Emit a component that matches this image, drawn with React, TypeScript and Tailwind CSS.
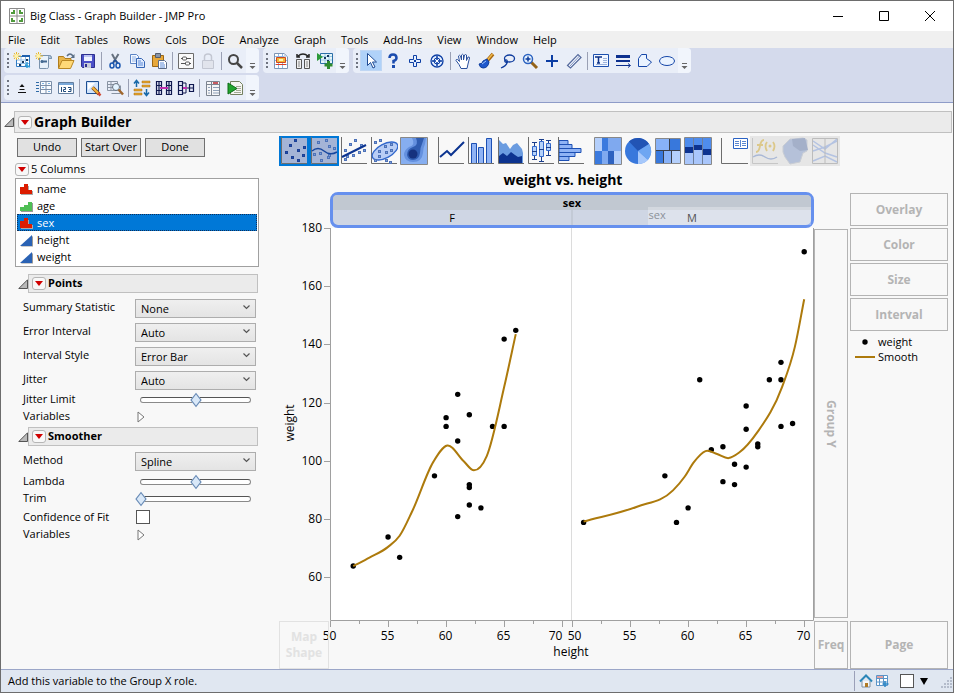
import type { ReactNode } from "react";

const menus = [
  "File",
  "Edit",
  "Tables",
  "Rows",
  "Cols",
  "DOE",
  "Analyze",
  "Graph",
  "Tools",
  "Add-Ins",
  "View",
  "Window",
  "Help",
];

const columns = [
  { name: "name", type: "nominal" },
  { name: "age", type: "ordinal" },
  { name: "sex", type: "nominal" },
  { name: "height", type: "continuous" },
  { name: "weight", type: "continuous" },
];

// [height, weight]
const female = [
  [52, 64], [55, 74], [56, 67], [59, 95], [60, 115], [60, 112],
  [61, 123], [61, 107], [61, 81], [62, 116], [62, 92], [62, 91],
  [62, 85], [63, 84], [64, 112], [65, 142], [65, 112], [66, 145],
];
const male = [
  [51, 79], [58, 95], [59, 79], [60, 84], [61, 128], [62, 104],
  [63, 105], [63, 93], [64, 99], [64, 92], [65, 119], [65, 111],
  [65, 98], [66, 106], [66, 105], [67, 128], [68, 134], [68, 128],
  [68, 112], [69, 113], [70, 172],
];
const femaleFit = [
  [52, 64], [53.4, 66.9], [55, 70.6], [56, 74.4], [57.1, 83],
  [58.9, 99.8], [60.1, 105.4], [61.5, 100.1], [62.4, 96.9],
  [63.5, 101.8], [65, 125.5], [66, 143.7],
];
const maleFit = [
  [51, 79.3], [55.6, 84.4], [58.7, 90], [59.7, 94.7], [60.5, 99.7],
  [61.5, 103.5], [62.5, 102.5], [63.5, 101.1], [64.4, 103], [66, 110.2],
  [68.1, 125.6], [69.2, 139.4], [70, 155.7],
];

const sx = (h: number, left: number) => left + (h - 50) * 11.61;
const sy = (w: number) => (180 - w) * 2.91 + 0.5;

// cubic Hermite through the fitted values
function smoothPath(data: number[][], left: number) {
  const p = data.map(([h, w]) => [sx(h, left), sy(w)]);
  const slope = (i: number) => (p[i + 1][1] - p[i][1]) / (p[i + 1][0] - p[i][0]);
  const m = p.map((_, i) => {
    if (i === 0) return slope(0);
    if (i === p.length - 1) return slope(i - 1);
    const before = p[i][0] - p[i - 1][0];
    const after = p[i + 1][0] - p[i][0];
    return (slope(i - 1) * after + slope(i) * before) / (before + after);
  });
  let d = `M${p[0][0]} ${p[0][1]}`;
  for (let i = 0; i < p.length - 1; i++) {
    const [x0, y0] = p[i];
    const [x1, y1] = p[i + 1];
    const t = (x1 - x0) / 3;
    d += `C${x0 + t} ${y0 + m[i] * t} ${x1 - t} ${y1 - m[i + 1] * t} ${x1} ${y1}`;
  }
  return d;
}

function Svg({ children, size = 18 }: { children: ReactNode; size?: number }) {
  return (
    <svg width={size} height={size} viewBox={`0 0 ${size} ${size}`} fill="none" aria-hidden="true" className="block shrink-0">
      {children}
    </svg>
  );
}

const icons: Record<string, ReactNode> = {
  newTable: (
    <>
      <path d="M3.500 4.500h13v10h-13z" fill="#fff" stroke="#2f7cc4" />
      <path d="M4 8h12M4 11.500h12M8 5v9M12.500 5v9" stroke="#8fbbe4" />
      <path d="M9 3h8v2H9z" fill="#1d5fae" />
      <path d="M3.500 0v8M0 4h8M1 1l5 6M6 1L1 7" stroke="#e8b930" />
      <circle cx="3.500" cy="4" r="2" fill="#fff3a8" />
      <path d="M9 9h2v2H9zM13 7h2v2h-2zM6 12h2v2H6z" fill="#16365f" />
      <path d="M14 10v6M12 13l5 2" stroke="#2b9bd6" strokeWidth="1.500" />
    </>
  ),
  newScript: (
    <>
      <path d="M4.500 3.500h10q2 0 2 3h-3v9q0 1-2 1h-7z" fill="#e9f2fb" stroke="#7a93ad" />
      <path d="M13.500 6.500h3q0-3-2-3-1 0-1 3" fill="#b9cfe4" stroke="#7a93ad" />
      <path d="M6 9.500h6" stroke="#456a92" strokeWidth="2" />
      <circle cx="7" cy="9.500" r="1.500" fill="#456a92" />
      <path d="M3.500 0v8M0 4h8M1 1l5 6M6 1L1 7" stroke="#e8b930" />
      <circle cx="3.500" cy="4" r="2" fill="#fff3a8" />
    </>
  ),
  open: (
    <>
      <path d="M1.500 16V4.500h5l1.500 2h6V9" fill="#e9b64c" stroke="#b07d1d" />
      <path d="M1.500 16.500l3.500-8h12l-3.500 8z" fill="#ffd978" stroke="#b98724" />
      <path d="M10 4q3-4 6 0" stroke="#5a6e86" strokeWidth="1.500" />
      <path d="M17.500 2v4h-4z" fill="#5a6e86" />
    </>
  ),
  save: (
    <>
      <path d="M2.500 2.500h13v13h-12l-1-1z" fill="#4b50c8" stroke="#2d2f8f" />
      <path d="M5 3h8v6H5z" fill="#eef2ff" />
      <path d="M5 3h8v2H5z" fill="#bcc4f0" />
      <path d="M5 11h7v5H5z" fill="#c9cdd8" />
      <path d="M6 12h2v3H6z" fill="#2d2f8f" />
    </>
  ),
  cut: (
    <>
      <path d="M6 2l5 9M12.500 2L7 11" stroke="#66717f" strokeWidth="2" />
      <path d="M9 8l-2 3M9 8l3 3" stroke="#1c4f9c" strokeWidth="1.500" />
      <ellipse cx="6" cy="13.500" rx="2" ry="2.500" stroke="#1c58b0" strokeWidth="1.500" />
      <ellipse cx="12" cy="13.500" rx="2" ry="2.500" stroke="#1c58b0" strokeWidth="1.500" />
    </>
  ),
  copy: (
    <>
      <path d="M2.500 2.500h6l2 2v7h-8z" fill="#f4f8ff" stroke="#5b83c4" />
      <path d="M4 5h4M4 7h5M4 9h5" stroke="#8fb0e4" />
      <path d="M8.500 6.500h5l3 3v6h-8z" fill="#dfeafd" stroke="#3464b4" />
      <path d="M10 9h3M10 11h5M10 13h5" stroke="#5a8ad8" />
    </>
  ),
  paste: (
    <>
      <path d="M2.500 3.500h11v11h-11z" fill="#e8a83a" stroke="#9c6713" />
      <path d="M5.500 1.500h5v4h-5z" fill="#8b95a5" stroke="#545e6e" />
      <path d="M8.500 8.500h6l2 2v6h-8z" fill="#fff" stroke="#5a6b88" />
      <path d="M10 11h4M10 13h5M10 15h5" stroke="#5a8ad8" />
    </>
  ),
  prefs: (
    <>
      <path d="M1.500 1.500h15v15h-15z" fill="#fafafa" stroke="#6c6c6c" />
      <path d="M4 6.500h10M4 11.500h10" stroke="#555" />
      <rect x="5.500" y="5" width="4" height="3" rx="1" fill="#fff" stroke="#555" />
      <rect x="8.500" y="10" width="4" height="3" rx="1" fill="#fff" stroke="#555" />
    </>
  ),
  lock: (
    <>
      <path d="M5.500 8V5q0-3 3.500-3t3.500 3v3" stroke="#c3c7d2" strokeWidth="1.500" />
      <path d="M3.500 8.500h11v8h-11z" fill="#e1e4ec" stroke="#c3c7d2" />
    </>
  ),
  search: (
    <>
      <circle cx="7.500" cy="7.500" r="4.500" stroke="#454545" strokeWidth="2" />
      <path d="M11 11l5 5" stroke="#454545" strokeWidth="2.500" />
    </>
  ),
  chartSheet: (
    <>
      <path d="M2.500 1.500h10l3 3v12h-13z" fill="#fff" stroke="#7d95b5" />
      <path d="M3 4.500h12M3 8.500h12M3 12.500h12M6.500 2v14M10.500 2v14" stroke="#8fb8e4" />
      <path d="M4.500 5.500h9v5h-9z" fill="#f1b73a" stroke="#d0461f" />
      <path d="M7 7h4v2H7z" fill="#fff2b0" />
      <path d="M4 12.500h10" stroke="#dd3a22" />
      <path d="M12 1l4 4h-4z" fill="#c8d4e6" />
    </>
  ),
  compare: (
    <>
      <path d="M2.500 7.500h5v9h-5zM10.500 7.500h5v9h-5z" fill="#eee" stroke="#555" />
      <path d="M4 10h2M4 12h2M4 14h2M12 10h2M12 12h2M12 14h2" stroke="#888" />
      <path d="M4 4q5-4 10 0M3 2v3h3M15 2v3h-3" stroke="#222" strokeWidth="1.500" />
    </>
  ),
  addTable: (
    <>
      <path d="M4.500 1.500h12v10h-12z" fill="#e6f5fb" stroke="#2b6fa8" />
      <path d="M5 4.500h11M5 8h11M9 2v9M13 2v9" stroke="#9ccbe2" />
      <path d="M1 1l6 4-6 4z" fill="#2c9a3a" />
      <path d="M8 5h2v2H8zM11 3h2v2h-2zM11 8h2v2h-2z" fill="#16365f" />
      <path d="M12.500 9v8M8.500 13h8" stroke="#2e8b2e" strokeWidth="3" />
    </>
  ),
  arrow: <path d="M5.500 1.500v12l3-3 2.500 5.500 2-1-2.500-5h4z" fill="#fff" stroke="#1f4b94" />,
  help: (
    <>
      <path d="M5.500 6q0-3.500 3.500-3.500T12.500 6Q12.500 8 9.500 9v2.500" stroke="#1c4cae" strokeWidth="2.500" />
      <path d="M8 13h3v3H8z" fill="#1c4cae" />
    </>
  ),
  crosshair: (
    <>
      <path d="M7.500 3.500h3v4h4v3h-4v4h-3v-4h-4v-3h4z" fill="#e6f0ff" stroke="#0d3fa5" />
      <path d="M8 8h2v2H8z" fill="#0d3fa5" />
    </>
  ),
  target: (
    <>
      <circle cx="9" cy="9" r="6" fill="#e6f0ff" stroke="#0d3fa5" strokeWidth="1.300" />
      <path d="M9 4v10M4 9h10" stroke="#0d3fa5" strokeWidth="1.500" />
      <circle cx="9" cy="9" r="3" stroke="#0d3fa5" />
      <path d="M8 8h2v2H8z" fill="#fff" />
    </>
  ),
  hand: (
    <path
      d="M6 16.500l-2-4-3-4q0-1.500 1.500-1l2 2-1-5.500q1-1.500 2 0l1 4V3q1-1.500 2 0v5l1-5q1-1 2 0v5.500l1.500-3.500q1.500-.5 1.500 1l-1.500 6-1 4.500z"
      fill="#fff"
      stroke="#2a4f9c"
    />
  ),
  brush: (
    <>
      <path d="M10 9l6-7" stroke="#a8670f" strokeWidth="3.500" />
      <path d="M10 8.500l5.500-6.500" stroke="#f0b94c" strokeWidth="1.500" />
      <path d="M2 12q4 0 4-3l4-2 2 3q-1 6-6 6-3 0-4-4z" fill="#1f58cc" stroke="#0d3c9d" />
      <path d="M5 12l4-3" stroke="#9cc4ff" />
    </>
  ),
  lasso: (
    <>
      <ellipse cx="10.500" cy="6.500" rx="5" ry="3.500" stroke="#0e3b9d" strokeWidth="1.300" />
      <path d="M9 10q-4 1-3-2 3-1 2 3-1 3-6 5" stroke="#0e3b9d" strokeWidth="1.300" />
    </>
  ),
  zoomIn: (
    <>
      <path d="M10 10l6 6" stroke="#94631a" strokeWidth="3" />
      <circle cx="7" cy="7" r="4.500" fill="#e6f2ff" stroke="#2b62c0" strokeWidth="1.500" />
      <path d="M7 4.500v5M4.500 7h5" stroke="#0b3a9a" strokeWidth="1.500" />
    </>
  ),
  plus: <path d="M9 3v12M3 9h12" stroke="#0c3da3" strokeWidth="2" />,
  ruler: (
    <>
      <path d="M2.500 13.500L13 2.500l3 3L5.500 16z" fill="#f6f9ff" stroke="#54699c" strokeWidth="1.200" />
      <path d="M4 15L14.500 4" stroke="#7b8fc0" />
    </>
  ),
  textTool: (
    <>
      <path d="M1.500 2.500h15v12h-15z" fill="#f1f6ff" stroke="#1b4fae" />
      <path d="M3 5h7M6.500 5v6M5 11h3" stroke="#0a2f86" strokeWidth="1.500" />
      <path d="M11 6.500h4M11 8.500h4M11 10.500h4M4 12.500h11" stroke="#9bb2dc" />
    </>
  ),
  lines: (
    <>
      <path d="M2 4.500h14" stroke="#0c2f8e" strokeWidth="3" />
      <path d="M2 9h14" stroke="#0c2f8e" strokeWidth="2" />
      <path d="M2 13.500h14M14 11.500l2.500 2-2.500 2" stroke="#0c2f8e" />
    </>
  ),
  polygon: <path d="M2.500 14.500v-8l3-4h5v4l5 3.500-4.500 4.500z" fill="#eaf3ff" stroke="#1546a8" />,
  oval: <ellipse cx="9" cy="9" rx="7.500" ry="4.500" fill="#eaf3ff" stroke="#1546a8" />,
  sortUp: (
    <>
      <path d="M9 5l2.500 3h-5z" fill="#111" />
      <path d="M6.500 10.500h5M5 13.500h8" stroke="#111" />
    </>
  ),
  gridList: (
    <>
      <path d="M5.500 2.500h11v12h-11zM5.500 6.500h11M5.500 10.500h11M11 2.500v12" fill="#f8fbff" stroke="#7c8fa8" />
      <path d="M1 3.500h3M1 6.500h3M1 9.500h3M1 12.500h3" stroke="#2e6aa6" />
      <path d="M7 4.500h2M13 4.500h2M7 8.500h2M13 12.500h2" stroke="#7fb2e0" />
    </>
  ),
  grid123: (
    <>
      <path d="M1.500 3.500h15v11h-15z" fill="#fff" stroke="#637e9f" />
      <path d="M2 4h14v2H2z" fill="#7aa8d8" />
      <path d="M4.500 8v5M6.500 8.500h2v2h-2v2h2.500M11 8.500h3v4h-3M12 10.500h2" stroke="#234d7d" />
    </>
  ),
  editCell: (
    <>
      <path d="M2.500 2.500h12v12h-12z" fill="#cfe3fb" stroke="#1d4f93" />
      <path d="M4 4h7L4 11z" fill="#fff" />
      <path d="M8.500 8.500l6.500 6.500" stroke="#8a4a16" strokeWidth="3.500" />
      <path d="M8.500 8.500l6 6" stroke="#f4b73b" strokeWidth="2" />
      <path d="M14 14l2.500 2.500" stroke="#d04a35" strokeWidth="2.500" />
    </>
  ),
  searchGrid: (
    <>
      <path d="M1.500 2.500h10v9h-10zM1.500 5.500h10M1.500 8.500h10M5 2.500v9M5.500 14.500h9v-8" stroke="#8994a3" />
      <circle cx="10" cy="8" r="3.500" fill="#e4f4ff" stroke="#66717f" />
      <path d="M12.500 10.500l4.500 5" stroke="#a0672c" strokeWidth="2.500" />
    </>
  ),
  swap: (
    <>
      <path d="M9 2h8v2H9zM9 6h8v2H9zM1 10h8v2H1zM1 14h8v2H1z" fill="#e7a52d" stroke="#a56f10" strokeWidth=".5" />
      <path d="M3.500 8V3M1 4.500l2.500-3 2.500 3M13.500 10v5M11 13.500l2.500 3 2.500-3" stroke="#1768a8" strokeWidth="1.500" />
    </>
  ),
  join: (
    <>
      <path d="M1.500 2.500h5v13h-5zM1.500 6.500h5M1.500 11.500h5M4 2.500v13M11.500 2.500h5v13h-5zM11.500 6.500h5M11.500 11.500h5M14 2.500v13" fill="#dfe3f4" stroke="#10194f" strokeWidth="1.200" />
      <path d="M5 9h8" stroke="#c02fb0" strokeWidth="2" />
    </>
  ),
  split: (
    <>
      <path d="M1.500 2.500h4v13h-4zM1.500 6.500h4M1.500 11.500h4M12.500 5.500h4v7h-4zM12.500 9h4" fill="#dfe3f4" stroke="#10194f" strokeWidth="1.200" />
      <path d="M6 4h3v5h3M6 14h3V9" stroke="#10194f" />
      <path d="M6 9h4" stroke="#c02fb0" strokeWidth="2" />
    </>
  ),
  report: (
    <>
      <path d="M2.500 2.500h13v14h-13z" fill="#f5f6f8" stroke="#7d8591" />
      <path d="M2.500 5.500h13M7.500 3v13" stroke="#7d8591" />
      <path d="M9 8.500h6M9 11.500h6M9 14h6M4 8.500h2M4 11.500h2M4 14h2" stroke="#8fa0b8" />
      <path d="M9 3h5v2H9z" fill="#c75b62" />
    </>
  ),
  runScript: (
    <>
      <path d="M4.500 2.500h9l3 3v10h-12z" fill="#f6f6f2" stroke="#74805f" />
      <path d="M10 7.500h5M11 9.500h4M10 11.500h5M8 13.500h7" stroke="#a4a995" />
      <path d="M2 4l9 5.500L2 15z" fill="#23a52e" stroke="#0c6d17" />
    </>
  ),
};

type Item = string | null;

const toolRows: { label: string; items: Item[] }[][] = [
  [
    {
      label: "File",
      items: ["newTable", "newScript", "open", "save", null, "cut", "copy", "paste", null, "prefs", "lock", null, "search"],
    },
    { label: "Analysis", items: ["chartSheet", "compare", "addTable"] },
    {
      label: "Tools",
      items: [
        "arrow", "help", "crosshair", "target", null,
        "hand", "brush", "lasso", "zoomIn", "plus", "ruler", null,
        "textTool", "lines", "polygon", "oval",
      ],
    },
  ],
  [
    {
      label: "Tables",
      items: ["sortUp", "gridList", "grid123", null, "editCell", "searchGrid", null, "swap", "join", "split", null, "report", "runScript"],
    },
  ],
];

function ToolGroup({ label, items }: { label: string; items: Item[] }) {
  return (
    <div role="toolbar" aria-label={label} className="flex h-[25px] items-center rounded bg-[#e9eef8]">
      <div className="ml-[3px] mr-px h-[15px] w-[3px] border-l-2 border-dotted border-[#6f7480]" />
      {items.map((item, i) =>
        item ? (
          <button
            key={i}
            aria-label={item}
            className={`flex h-[21px] w-[22px] items-center justify-center ${item === "arrow" ? "border border-[#bfd6f3] bg-[#b0d2f9]" : ""}`}
          >
            <Svg>{icons[item]}</Svg>
          </button>
        ) : (
          <div key={i} className="mx-[2px] h-[18px] w-px bg-[#9aa0b4]" />
        )
      )}
      <button aria-label="More" className="flex h-full w-[13px] items-end justify-center rounded-r bg-[#f1f5fc] pb-[3px]">
        <svg width="7" height="7" viewBox="0 0 7 7" aria-hidden="true">
          <path d="M1 0h5v1H1zM.5 3h6L3.500 6z" fill="#666" />
        </svg>
      </button>
    </div>
  );
}

function Disclosure() {
  return (
    <svg width="10" height="10" viewBox="0 0 10 10" className="shrink-0" aria-hidden="true">
      <path d="M9.500 .8v8.700H.8z" fill="#b9b9b9" stroke="#555" />
    </svg>
  );
}

function RedTriangle() {
  return (
    <button aria-label="Options" className="flex h-[13px] w-[14px] shrink-0 items-center justify-center rounded-[3px] border border-[#b5b5b5] bg-[#f8f8f8]">
      <svg width="8" height="5" viewBox="0 0 8 5" aria-hidden="true">
        <path d="M0 0h8L4 5z" fill="#d00000" />
      </svg>
    </button>
  );
}

function ColumnIcon({ type }: { type: string }) {
  return (
    <svg width="13" height="13" viewBox="0 0 13 13" className="shrink-0" shapeRendering={type === "continuous" ? "auto" : "crispEdges"} aria-hidden="true">
      {type === "nominal" && (
        <>
          <path d="M1 11h12v1H1zM8 3h1v4H8zM12 8h1v4h-1z" fill="#a9a9a9" />
          <path d="M0 4h4V1h4v10H0zM8 7h4v4H8z" fill="#dc1c00" />
        </>
      )}
      {type === "ordinal" && (
        <>
          <path d="M1 11h12v1H1zM12 3h1v9h-1z" fill="#999" />
          <path d="M0 7h4V5h4V2h4v9H0z" fill="#4fbf55" />
        </>
      )}
      {type === "continuous" && (
        <>
          <path d="M1 12.500h12V2z" fill="#999" />
          <path d="M0 12L12 1v11z" fill="#2a62b4" />
        </>
      )}
    </svg>
  );
}

function SectionHeader({ title }: { title: string }) {
  return (
    <div className="flex items-center pl-[17px]">
      <Disclosure />
      <h2 className="flex h-[19px] flex-1 items-center gap-[2px] border border-[#c0c0c0] bg-[#ebebeb] pl-[3px] text-[11px] font-bold">
        <RedTriangle />
        {title}
      </h2>
    </div>
  );
}

const labelStyle = "w-[112px] shrink-0 text-[11px] leading-4";

function SelectRow({ label, value }: { label: string; value: string }) {
  const id = label.toLowerCase().replace(/ /g, "-");
  return (
    <div className="flex h-5">
      <label htmlFor={id} className={labelStyle}>
        {label}
      </label>
      <div className="relative flex-1">
        <select id={id} defaultValue={value} className="h-[19px] w-full appearance-none border border-[#adadad] bg-linear-to-b from-[#efefef] to-[#e4e4e4] pl-[5px] text-[11px] leading-4">
          <option>{value}</option>
        </select>
        <svg width="7" height="5" viewBox="0 0 7 5" className="pointer-events-none absolute right-1.5 top-1.5" aria-hidden="true">
          <path d="M.5 .5l3 3 3-3" fill="none" stroke="#555" strokeWidth="1.200" />
        </svg>
      </div>
    </div>
  );
}

function SliderRow({ label, value }: { label: string; value: number }) {
  const id = label.toLowerCase().replace(/ /g, "-");
  return (
    <div className="flex h-[17px] items-center">
      <label htmlFor={id} className={`${labelStyle} pb-0.5`}>
        {label}
      </label>
      <div className="ml-[5px] mr-[5px] flex h-1.5 flex-1 items-center rounded-full border border-[#8a8a8a] border-t-[#555] bg-white">
        <input
          id={id}
          type="range"
          defaultValue={value}
          className="-mx-1 h-4 w-[117px] shrink-0 appearance-none bg-transparent [&::-webkit-slider-thumb]:size-2 [&::-webkit-slider-thumb]:appearance-none [&::-webkit-slider-thumb]:border [&::-webkit-slider-thumb]:border-[#6b8cb5] [&::-webkit-slider-thumb]:bg-[#d9e8f8] [&::-webkit-slider-thumb]:[transform:scaleY(1.3)_rotate(45deg)]"
        />
      </div>
    </div>
  );
}

function VariablesRow() {
  return (
    <div className="flex h-[17px] items-center">
      <span className={`${labelStyle} pb-0.5`}>Variables</span>
      <button aria-label="Show variables" className="ml-0.5">
        <svg width="8" height="12" viewBox="0 0 8 12" aria-hidden="true">
          <path d="M1 1v10l6-5z" fill="#fff" stroke="#777" />
        </svg>
      </button>
    </div>
  );
}

const axes = <path d="M1.500 0v26.500H27" stroke="#6d6d6d" />;

function Dots({ at, fill = "#7f9fd8", stroke = "#4d72b8" }: { at: number[][]; fill?: string; stroke?: string }) {
  return (
    <>
      {at.map(([x, y], i) => (
        <rect key={i} x={x + 0.5} y={y + 0.5} width="2" height="2" fill={fill} stroke={stroke} />
      ))}
    </>
  );
}

const gallery: { label: string; art: ReactNode }[][] = [
  [
    {
      label: "Points",
      art: (
        <>
          {axes}
          <Dots fill="#1f4fb0" stroke="#1c3f94" at={[[14, 2], [9, 7], [23, 9], [5, 14], [17, 12], [11, 19], [22, 17], [17, 22]]} />
        </>
      ),
    },
    {
      label: "Smoother",
      art: (
        <>
          {axes}
          <Dots at={[[7, 4], [15, 2], [23, 10], [18, 8], [9, 15], [3, 16], [18, 17], [10, 22], [17, 19]]} />
          <path d="M2 14q6-5 12 0t13 1" stroke="#17469e" strokeWidth="1.500" />
        </>
      ),
    },
    {
      label: "Line of Fit",
      art: (
        <>
          {axes}
          <Dots at={[[9, 6], [14, 2], [4, 12], [20, 7], [6, 18], [12, 17], [18, 14], [23, 12], [4, 21]]} />
          <path d="M2 20L26 8" stroke="#0b3390" strokeWidth="2" />
        </>
      ),
    },
    {
      label: "Ellipse",
      art: (
        <>
          {axes}
          <ellipse cx="15" cy="14" rx="14" ry="7" transform="rotate(-28 15 14)" fill="#b8cdf5" stroke="#3268cc" strokeWidth="1.300" />
          <Dots at={[[4, 4], [9, 2], [14, 8], [20, 6], [8, 13], [15, 14], [20, 12], [8, 18], [15, 22], [4, 22], [19, 24]]} />
        </>
      ),
    },
    {
      label: "Contour",
      art: (
        <>
          <path d="M.5 .5h27v27H.5z" fill="#86aef0" stroke="#888" />
          <path d="M12 1q4 7-3 9-5 3-5 8 1 7 9 7 9 0 10-9 0-5 2-9l1-6z" fill="#6490de" />
          <path d="M16 1q3 7-3 9-6 2-6 8 1 5 6 5 6 0 7-7 0-5 2-9l2-6z" fill="#2f5cb0" />
          <circle cx="13" cy="17" r="4.500" fill="#16327e" />
        </>
      ),
    },
  ],
  [
    { label: "Line", art: <>{axes}<path d="M3 20l7-6 4 4L27 5" stroke="#0b3390" strokeWidth="2" /></> },
    {
      label: "Bar",
      art: (
        <>
          {axes}
          <path d="M4.500 26V6.500h5V26M11.500 26V10.500h5V26M19.500 26V1.500h5V26" fill="#8fb3f5" stroke="#1d50b4" />
        </>
      ),
    },
    {
      label: "Area",
      art: (
        <>
          <path d="M2 26V3l4 4 3-1 4 6 3-4 4-2 5 6 1 4v10z" fill="#6b9ce0" />
          <path d="M2 26v-7l4-3 4 3 4-4 4 3 3 2 4-1v7z" fill="#0d338f" />
          {axes}
        </>
      ),
    },
    {
      label: "Box Plot",
      art: (
        <>
          {axes}
          <path d="M7.500 5v18M14.500 2v22M21.500 3v16M5 5.500h5M5 22.500h5M12 2.500h5M12 24.500h5M19 3.500h5M19 18.500h5" stroke="#1b3f8c" />
          <path d="M5.500 9.500h4v9h-4zM12.500 4.500h4v15h-4zM19.500 6.500h4v7h-4z" fill="#b5d2fa" stroke="#3268cc" />
          <path d="M5 14.500h5M12 12.500h5M19 10.500h5" stroke="#1b3f8c" />
        </>
      ),
    },
    {
      label: "Histogram",
      art: (
        <>
          <path d="M2 3.500h9v4H2zM2 7.500h13v4H2zM2 11.500h22v4H2zM2 15.500h16v4H2zM2 19.500h10v4H2z" fill="#8fb3f5" stroke="#1d50b4" />
          {axes}
        </>
      ),
    },
  ],
  [
    {
      label: "Heatmap",
      art: (
        <>
          <path d="M1 1h26v26H1z" fill="#7fa9ef" />
          <path d="M1 1h7v13H1zM20 14h7v13h-7z" fill="#b4cffb" />
          <path d="M8 1h6v13H8zM1 14h7v13H1z" fill="#3b7ade" />
          <path d="M14 14h6v13h-6z" fill="#2d62c0" />
          <path d="M.5 .5h27v27H.5z" stroke="#888" />
        </>
      ),
    },
    {
      label: "Pie",
      art: (
        <>
          <circle cx="14" cy="14" r="13" fill="#3878dc" />
          <path d="M14 14L5 4.500A13 13 0 0 1 25 7z" fill="#2254b4" />
          <path d="M14 14l11-7a13 13 0 0 1-1 16z" fill="#6ea6f2" />
          <path d="M14 14l10 9a13 13 0 0 1-10 4z" fill="#a6c8fb" />
        </>
      ),
    },
    {
      label: "Treemap",
      art: (
        <>
          <path d="M2 2h24v24H2z" fill="#3878dc" />
          <path d="M2 2h13v12H2zM9 14h9v12H9z" fill="#88b2f8" />
          <path d="M18 14h8v12h-8z" fill="#b4cffb" />
          <path d="M15.500 2v12M2 13.500h24M9.500 14v12M17.500 14v12" stroke="#3a3f4a" />
          <path d="M1.500 1.500h25v25h-25z" stroke="#888" />
        </>
      ),
    },
    {
      label: "Mosaic",
      art: (
        <>
          <path d="M1 1h26v26H1z" fill="#4f8cec" />
          <path d="M1 15h8v12H1zM10 12h8v15h-8zM19 17h8v10h-8z" fill="#a9c6fb" />
          <path d="M1 10h8v6H1zM10 8h8v5h-8zM19 12h8v6h-8z" fill="#0d3390" />
          <path d="M9.500 1v26M18.500 1v26" stroke="#6f7f9c" />
          <path d="M.5 .5h27v27H.5z" stroke="#888" />
        </>
      ),
    },
  ],
  [
    {
      label: "Caption Box",
      art: (
        <>
          <path d="M.5 1v25.500H27" stroke="#6d6d6d" />
          <path d="M12.500 1.500h14v10h-14z" fill="#fff" stroke="#2a62c4" />
          <path d="M19.500 3v7M14 4.500h4M14 6.500h4M14 8.500h4M21 4.500h4M21 6.500h4M21 8.500h4" stroke="#5a86d0" />
        </>
      ),
    },
    {
      label: "Formula",
      art: (
        <>
          <path d="M1.500 1v25.500H27" stroke="#c6c6c6" />
          <path d="M5 15q3 0 4-6t4-6M6 8h6M16 5q-3 4 0 9M22 5q3 4 0 9" stroke="#dcc88a" strokeWidth="1.800" />
          <circle cx="19" cy="9" r="1.500" fill="#dcc88a" />
          <path d="M2 20q6-4 12 0t12 0" stroke="#a9b8d6" strokeWidth="1.500" />
        </>
      ),
    },
    {
      label: "Map Shapes",
      art: (
        <>
          <path d="M2 9l7-7h4l9-1 4 2v11l-4 2-3 9-10 2-5-7-2-5z" fill="#b5c1d9" stroke="#c9cdd4" />
          <path d="M11 2l13-1 3 12-8 1-7-5z" fill="#a4b0c9" />
        </>
      ),
    },
    {
      label: "Parallel",
      art: (
        <>
          <path d="M2 4l12 8L26 2M2 14l12-4 12-6M2 24l12-5 12 6M2 8l12 8 12 4" stroke="#b4c3e2" strokeWidth="1.500" />
          <path d="M1.500 1.500h25v25h-25zM14 1v26" stroke="#bcbcbc" />
        </>
      ),
    },
  ],
];

function Gallery() {
  return (
    <div className="flex h-[30px] items-center">
      {gallery.map((group, g) => (
        <div key={g} className={`flex ${g ? "ml-[7px]" : ""}`}>
          {group.map(({ label, art }, i) => (
            <button
              key={label}
              aria-label={label}
              className={`flex size-[30px] items-center justify-center ${
                g === 0 && i < 2 ? "border-2 border-[#0078d7] bg-[#a5b4d6]" : g === 3 && i > 0 ? "bg-[#e6e6e6]" : ""
              }`}
            >
              <Svg size={28}>{art}</Svg>
            </button>
          ))}
        </div>
      ))}
    </div>
  );
}

function Panel({ left, points, fit }: { left: number; points: number[][]; fit: number[][] }) {
  return (
    <>
      {points.map(([h, w], i) => (
        <circle key={i} cx={sx(h, left)} cy={sy(w)} r="2.700" fill="#000" />
      ))}
      <path d={smoothPath(fit, left)} fill="none" stroke="#ad7a0c" strokeWidth="2" />
    </>
  );
}

function Chart() {
  return (
    <svg viewBox="0 0 535 441" className="w-full overflow-visible font-[Open_Sans] text-[12px]" role="img" aria-label="weight vs. height">
      <rect x="51" y="0" width="483" height="392" fill="#fff" />
      <path d="M292.500 0v392" stroke="#dcdcdc" />
      <path d="M51.500 0v392.500H534.500V0" fill="none" stroke="#a0a0a0" />
      {[60, 80, 100, 120, 140, 160, 180].map((w) => (
        <g key={w}>
          <path d={`M45 ${Math.floor(sy(w)) + 0.5}h6`} stroke="#a0a0a0" />
          <text x="43" y={Math.floor(sy(w)) + 4} textAnchor="end">
            {w}
          </text>
        </g>
      ))}
      {[51, 293].map((left) =>
        [50, 52.5, 55, 57.5, 60, 62.5, 65, 67.5, 70].map((h) => {
          const x = Math.floor(sx(h, left)) + 0.5;
          return (
            <g key={`${left}-${h}`}>
              <path d={`M${x} 393v${h % 5 ? 3 : 6}`} stroke="#a0a0a0" />
              {h % 5 === 0 && (
                <text x={h === 50 && left > 51 ? x + 2 : h === 70 && left === 51 ? x - 7 : x - 1} y="412" textAnchor="middle">
                  {h}
                </text>
              )}
            </g>
          );
        })
      )}
      <text x="292" y="428" textAnchor="middle">
        height
      </text>
      <text transform="translate(15 195) rotate(-90)" textAnchor="middle">
        weight
      </text>
      <Panel left={51} points={female} fit={femaleFit} />
      <Panel left={293} points={male} fit={maleFit} />
    </svg>
  );
}

function DropZone({ children, className = "" }: { children: ReactNode; className?: string }) {
  return (
    <div className={`flex items-center justify-center border border-[#b4b4b4] text-center text-xs font-bold text-[#b4b4b4] ${className}`}>
      {children}
    </div>
  );
}

export default function App() {
  return (
    <div className="flex h-screen flex-col border border-[#6d6d6d] bg-[#f8f8f8] font-[Open_Sans,sans-serif] text-xs text-black">
      <header className="flex h-[30px] shrink-0 items-center bg-white pl-2">
        <Svg size={16}>
          <path d="M.5 .5h15v15H.5zM8 0v16M0 8h16" fill="#fff" stroke="#8a8a8a" />
          <path d="M2 6V4h2V2h2v4zM10 6V2h2v2h2v2zM2 14v-4h2v2h2v2zM10 14v-2h2v-2h2v4z" fill="#4f9a3c" />
        </Svg>
        <h1 className="ml-[5px] flex-1 text-[11px]">Big Class - Graph Builder - JMP Pro</h1>
        <button aria-label="Minimize" className="flex w-[46px] justify-center">
          <Svg size={12}><path d="M1 6.500h10" stroke="#000" /></Svg>
        </button>
        <button aria-label="Maximize" className="flex w-[46px] justify-center">
          <Svg size={12}><path d="M1.500 1.500h9v9h-9z" stroke="#000" /></Svg>
        </button>
        <button aria-label="Close" className="flex w-[46px] justify-center">
          <Svg size={12}><path d="M1 1l10 10M11 1L1 11" stroke="#000" /></Svg>
        </button>
      </header>

      <nav className="flex h-[17px] shrink-0 items-center gap-[15px] bg-[#f0f0f0] pl-[7px] pt-0.5 text-[11px]">
        {menus.map((menu) => (
          <button key={menu}>{menu}</button>
        ))}
      </nav>

      <div className="flex shrink-0 flex-col gap-[2px] border-b border-[#8f9cc8] bg-[#d4daec] pb-[2px] pl-[3px]">
        {toolRows.map((row, i) => (
          <div key={i} className="flex gap-1">
            {row.map((group) => (
              <ToolGroup key={group.label} {...group} />
            ))}
          </div>
        ))}
      </div>

      <div className="mt-2 flex shrink-0 items-center pl-[3px] pr-px">
        <Disclosure />
        <h2 className="flex h-[22px] flex-1 items-center gap-[2px] border border-[#c0c0c0] bg-[#ebebeb] pl-[3px] text-sm font-bold">
          <RedTriangle />
          Graph Builder
        </h2>
      </div>

      <main className="flex min-h-0 flex-1">
        <aside className="w-[257px] shrink-0 pt-[5px]">
          <div className="flex gap-1 pl-4 text-[11px]">
            {["Undo", "Start Over", "Done"].map((label) => (
              <button key={label} className="flex h-[19px] w-[60px] items-center justify-center whitespace-nowrap border border-[#707070] bg-[#e1e1e1]">
                {label}
              </button>
            ))}
          </div>
          <div className="flex h-[21px] items-center gap-[2px] pl-[14px] pt-1 text-[11px]">
            <RedTriangle />5 Columns
          </div>
          <ul className="ml-[14px] -mr-px border border-[#a0a0a0] bg-white p-px text-[11px]">
            {columns.map(({ name, type }) => (
              <li
                key={name}
                className={`flex h-[17px] items-center gap-1 border pl-0.5 pt-0.5 ${
                  name === "sex" ? "border-dotted border-[#10305a] bg-[#0078d7] text-white" : "border-transparent"
                }`}
              >
                <ColumnIcon type={type} />
                {name}
              </li>
            ))}
          </ul>

          <div className="mt-[7px]">
            <SectionHeader title="Points" />
            <div className="mb-[2px] pl-[22px] pr-0.5 pt-1.5">
              <div className="flex flex-col gap-1">
                <SelectRow label="Summary Statistic" value="None" />
                <SelectRow label="Error Interval" value="Auto" />
                <SelectRow label="Interval Style" value="Error Bar" />
                <SelectRow label="Jitter" value="Auto" />
              </div>
              <SliderRow label="Jitter Limit" value={50} />
              <VariablesRow />
            </div>
            <SectionHeader title="Smoother" />
            <div className="pl-[22px] pr-0.5 pt-1.5">
              <div className="mb-px">
                <SelectRow label="Method" value="Spline" />
              </div>
              <SliderRow label="Lambda" value={50} />
              <SliderRow label="Trim" value={0} />
              <div className="flex h-[19px] items-center">
                <label htmlFor="fit" className={labelStyle}>
                  Confidence of Fit
                </label>
                <input id="fit" type="checkbox" className="ml-px size-[14px] appearance-none border border-[#555] bg-white" />
              </div>
              <VariablesRow />
            </div>
          </div>
        </aside>

        <section className="ml-[21px] flex min-w-0 flex-1 flex-col pr-[5px] pt-[3px]">
          <Gallery />
          <div className="flex min-h-0 flex-1">
            <div className="relative flex min-w-0 flex-1 flex-col">
              <h3 className="mb-[2px] ml-[33px] mt-1 text-center text-sm font-bold">weight vs. height</h3>
              <div className="relative ml-[51px] grid h-9 grid-cols-2 grid-rows-2 rounded-lg border-3 border-[#6690ee] bg-[#cfd6e4] text-center text-[11px] leading-[15px]">
                <div className="col-span-2 rounded-t bg-[#c1c8d1] font-bold">sex</div>
                <div className="border-r border-[#c3cad6]">F</div>
                <div className="border-l border-[#c3cad6]">M</div>
                <div className="absolute bottom-0 left-[66%] right-0 top-3 bg-white/30 text-left text-[11px] leading-[15px] text-[#8b9199]">sex</div>
              </div>
              <Chart />
              <DropZone className="absolute bottom-0 left-0 h-12 w-[50px] border-[#e2e2e2] leading-4 text-[#e2e2e2]">
                Map
                <br />
                Shape
              </DropZone>
            </div>
            <div className="flex w-[34px] shrink-0 flex-col gap-[3px] pt-[63px]">
              <DropZone className="flex-1 [writing-mode:vertical-rl]">Group Y</DropZone>
              <DropZone className="h-12">Freq</DropZone>
            </div>
            <div className="ml-0.5 flex w-[98px] shrink-0 flex-col gap-[2px] pt-[27px]">
              {["Overlay", "Color", "Size", "Interval"].map((zone) => (
                <DropZone key={zone} className="h-[33px]">
                  {zone}
                </DropZone>
              ))}
              <div className="flex-1 pl-[5px] pt-px text-[11px] leading-[15px]">
                <div className="flex items-center gap-[3px]">
                  <svg width="20" height="6" aria-hidden="true"><circle cx="10" cy="3" r="2.700" /></svg>
                  weight
                </div>
                <div className="flex items-center gap-[3px]">
                  <div className="h-0.5 w-5 bg-[#ad7a0c]" />
                  Smooth
                </div>
              </div>
              <DropZone className="h-12">Page</DropZone>
            </div>
          </div>
        </section>
      </main>

      <footer className="flex h-[23px] shrink-0 items-center border-t border-[#9ba6c8] bg-[#e0e7f1] pl-[7px] text-[11px]">
        <span className="flex-1">Add this variable to the Group X role.</span>
        <div className="flex h-5 items-center border-l border-[#9ba0b8] pl-1">
          <button aria-label="Home" className="mr-0.5">
            <Svg size={14}>
              <path d="M3 7v6h8V7" fill="#f4f6f8" stroke="#8090a0" />
              <path d="M1 7.500l6-6 6 6" stroke="#2a86b8" strokeWidth="2" />
              <path d="M6 9h3v4H6z" fill="#b07a24" />
            </Svg>
          </button>
          <button aria-label="Data table">
            <Svg size={14}>
              <path d="M1.500 1.500h11v10h-11zM1.500 4.500h11M1.500 8h11M4.500 1.500v10M8.500 1.500v10" fill="#fff" stroke="#5a94c8" />
              <path d="M2 2h6v2H2z" fill="#e0a0a0" />
              <path d="M10 7v6M7.500 10h6" stroke="#2b86c6" strokeWidth="1.500" />
            </Svg>
          </button>
          <input type="checkbox" aria-label="Window" className="ml-[11px] size-[14px] appearance-none border border-[#555] bg-white" />
          <button aria-label="Window list" className="ml-1.5 mr-[13px]">
            <svg width="8" height="7" viewBox="0 0 8 7" aria-hidden="true"><path d="M0 0h8L4 7z" /></svg>
          </button>
          <svg width="12" height="12" viewBox="0 0 12 12" className="mt-1" aria-hidden="true">
            <path d="M9 0h2v2H9zM6 3h2v2H6zM9 3h2v2H9zM3 6h2v2H3zM6 6h2v2H6zM9 6h2v2H9zM0 9h2v2H0zM3 9h2v2H3zM6 9h2v2H6zM9 9h2v2H9z" fill="#b4bccb" />
          </svg>
        </div>
      </footer>
    </div>
  );
}
